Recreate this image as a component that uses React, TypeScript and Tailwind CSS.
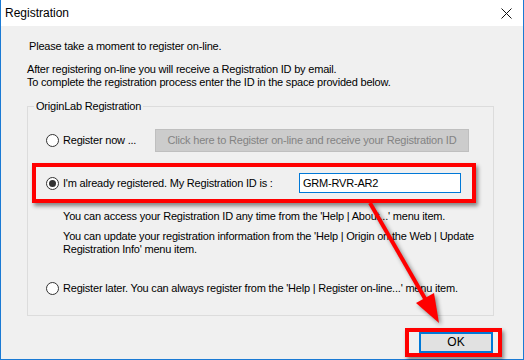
import React from 'react'

const font = { fontFamily: '"Liberation Sans", Arial, sans-serif' }

function Radio({ checked }: { checked?: boolean }) {
  return (
    <span className="w-[13px] h-[13px] rounded-full border border-[#333333] bg-white flex items-center justify-center flex-shrink-0">
      {checked && <span className="w-[7px] h-[7px] rounded-full bg-[#333333]" />}
    </span>
  )
}

export default function App() {
  return (
    <div
      className="relative w-[524px] h-[360px] flex flex-col bg-white border-l border-r border-b border-[#1a7ad4] text-black text-[11px] leading-[13px] tracking-[-0.2px]"
      style={font}
    >
      {/* title bar */}
      <div className="h-[26px] flex items-center justify-between pl-[4px] pr-[11px] bg-white">
        <span className="text-[12px] tracking-normal">Registration</span>
        <svg width="11" height="11" viewBox="0 0 11 11">
          <path d="M0.5 0.5L10.5 10.5M10.5 0.5L0.5 10.5" stroke="#111" strokeWidth="1" />
        </svg>
      </div>

      <div className="flex-1 bg-[#f0f0f0] flex flex-col">
        <div className="pt-[14px] pl-[26px]">
          <p className="pl-[2px]">Please take a moment to register on-line.</p>
          <p className="mt-[10px]">After registering on-line you will receive a Registration ID by email.</p>
          <p>To complete the registration process enter the ID in the space provided below.</p>
        </div>

        <fieldset className="ml-[26px] mt-[11px] w-[467px] h-[216px] border border-[#dcdcdc]">
          <legend className="ml-[6px] px-[2px]">OriginLab Registration</legend>

          <div className="mt-[16px] flex items-center h-[23px]">
            <div className="w-[127px] pl-[18px] flex items-center gap-[4px]">
              <Radio />
              <span>Register now ...</span>
            </div>
            <div className="w-[314px] h-[23px] bg-[#cccccc] border border-[#bfbfbf] text-[#838383] flex items-center justify-center">
              Click here to Register on-line and receive your Registration ID
            </div>
          </div>

          <div className="mt-[11px] ml-[4px] w-[444px] h-[40px] border-4 border-[#ff0000] shadow-[2px_3px_4px_rgba(0,0,0,0.45)] flex items-center pl-[10px] pr-[11px]">
            <Radio checked />
            <span className="ml-[4px]">I'm already registered. My Registration ID is :</span>
            <div className="ml-auto w-[162px] h-[20px] bg-white border border-[#0078d7] flex items-center pl-[3px]">
              GRM-RVR-AR2
            </div>
          </div>

          <div className="mt-[7px] pl-[35px]">
            <p>You can access your Registration ID any time from the 'Help | About...' menu item.</p>
            <p className="mt-[7px]">
              You can update your registration information from the 'Help | Origin on the Web | Update
              <br />
              Registration Info' menu item.
            </p>
          </div>

          <div className="mt-[26px] pl-[18px] flex items-center gap-[4px]">
            <Radio />
            <span>Register later. You can always register from the 'Help | Register on-line...' menu item.</span>
          </div>
        </fieldset>

        <div className="mt-[12px] flex justify-end pr-[21px]">
          <div className="w-[97px] h-[29px] border-4 border-[#ff0000] shadow-[2px_3px_4px_rgba(0,0,0,0.45)] flex items-center pl-[10px]">
            <div className="w-[74px] h-[21px] bg-[#e1e1e1] border-2 border-[#0078d7] flex items-center justify-center text-[12px] tracking-normal">
              OK
            </div>
          </div>
        </div>
      </div>

      {/* annotation arrow */}
      <svg
        className="absolute left-0 top-0 pointer-events-none"
        width="524"
        height="360"
        style={{ filter: 'drop-shadow(2px 2px 2px rgba(0,0,0,0.45))' }}
      >
        <line x1="369" y1="203" x2="426" y2="302" stroke="#ff0000" strokeWidth="4" />
        <polygon points="438,323 415,303 433,293" fill="#ff0000" />
      </svg>
    </div>
  )
}
